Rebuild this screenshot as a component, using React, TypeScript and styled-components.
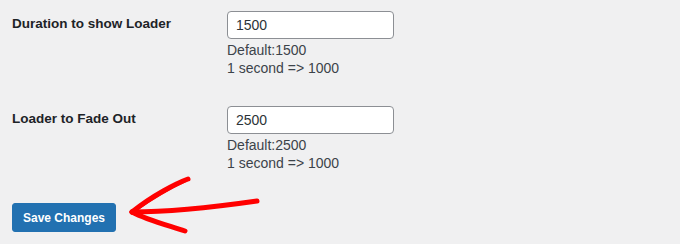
import React from "react";
import styled, { createGlobalStyle } from "styled-components";

const Global = createGlobalStyle`
  html, body { margin: 0; padding: 0; background: #f0f0f1; }
  body { font-family: "Liberation Sans", Arial, sans-serif; color: #1d2327; }
`;

const Page = styled.form`
  padding: 11px 0 0 12px;
  width: 680px;
  height: 244px;
  box-sizing: border-box;
  overflow: hidden;
`;

const Row = styled.div`
  display: grid;
  grid-template-columns: 215px 167px;
  height: 95px;
`;

const Label = styled.label`
  font-size: 13.5px;
  font-weight: 700;
  line-height: 1.3;
  padding-top: 4px;
  color: #1d2327;
`;

const Field = styled.div`
  display: flex;
  flex-direction: column;
`;

const Input = styled.input`
  box-sizing: border-box;
  width: 167px;
  height: 28px;
  margin: 0;
  padding: 0 8px;
  border: 1px solid #8c8f94;
  border-radius: 4px;
  background: #fff;
  font-family: "Liberation Sans", Arial, sans-serif;
  font-size: 14px;
  color: #2c3338;
  outline: none;
`;

const Desc = styled.p`
  margin: 2px 0 0;
  font-size: 14px;
  line-height: 18px;
  color: #3c434a;
`;

const Footer = styled.div`
  display: flex;
  align-items: flex-start;
  margin-top: 2px;
`;

const SaveButton = styled.button`
  box-sizing: border-box;
  height: 29px;
  padding: 0 10px;
  border: 1px solid #2271b1;
  border-radius: 3px;
  background: #2271b1;
  color: #fff;
  font-family: "Liberation Sans", Arial, sans-serif;
  font-size: 12px;
  font-weight: 700;
  cursor: pointer;
`;

const Arrow = styled.svg`
  display: block;
  margin-left: 9px;
  margin-top: -30px;
  overflow: visible;
`;

const settings = [
  { label: "Duration to show Loader", value: "1500" },
  { label: "Loader to Fade Out", value: "2500" },
];

export default function App() {
  return (
    <>
      <Global />
      <Page onSubmit={(e) => e.preventDefault()}>
        {settings.map((s) => (
          <Row key={s.label}>
            <Label>{s.label}</Label>
            <Field>
              <Input defaultValue={s.value} />
              <Desc>
                Default:{s.value}
                <br />1 second =&gt; 1000
              </Desc>
            </Field>
          </Row>
        ))}
        <Footer>
          <SaveButton type="submit">Save Changes</SaveButton>
          <Arrow width="140" height="64" viewBox="0 0 140 64">
            <g fill="none" stroke="#ff0000" strokeWidth="5" strokeLinecap="round" strokeLinejoin="round">
              <path d="M63 6 C 52 10, 28 22, 7 39" />
              <path d="M60 8 C 45 15, 25 27, 9 38" strokeWidth="3" />
              <path d="M7 39 C 50 39, 90 34, 132 28" />
              <path d="M7 39 C 22 47, 42 52, 60 58" />
            </g>
          </Arrow>
        </Footer>
      </Page>
    </>
  );
}
